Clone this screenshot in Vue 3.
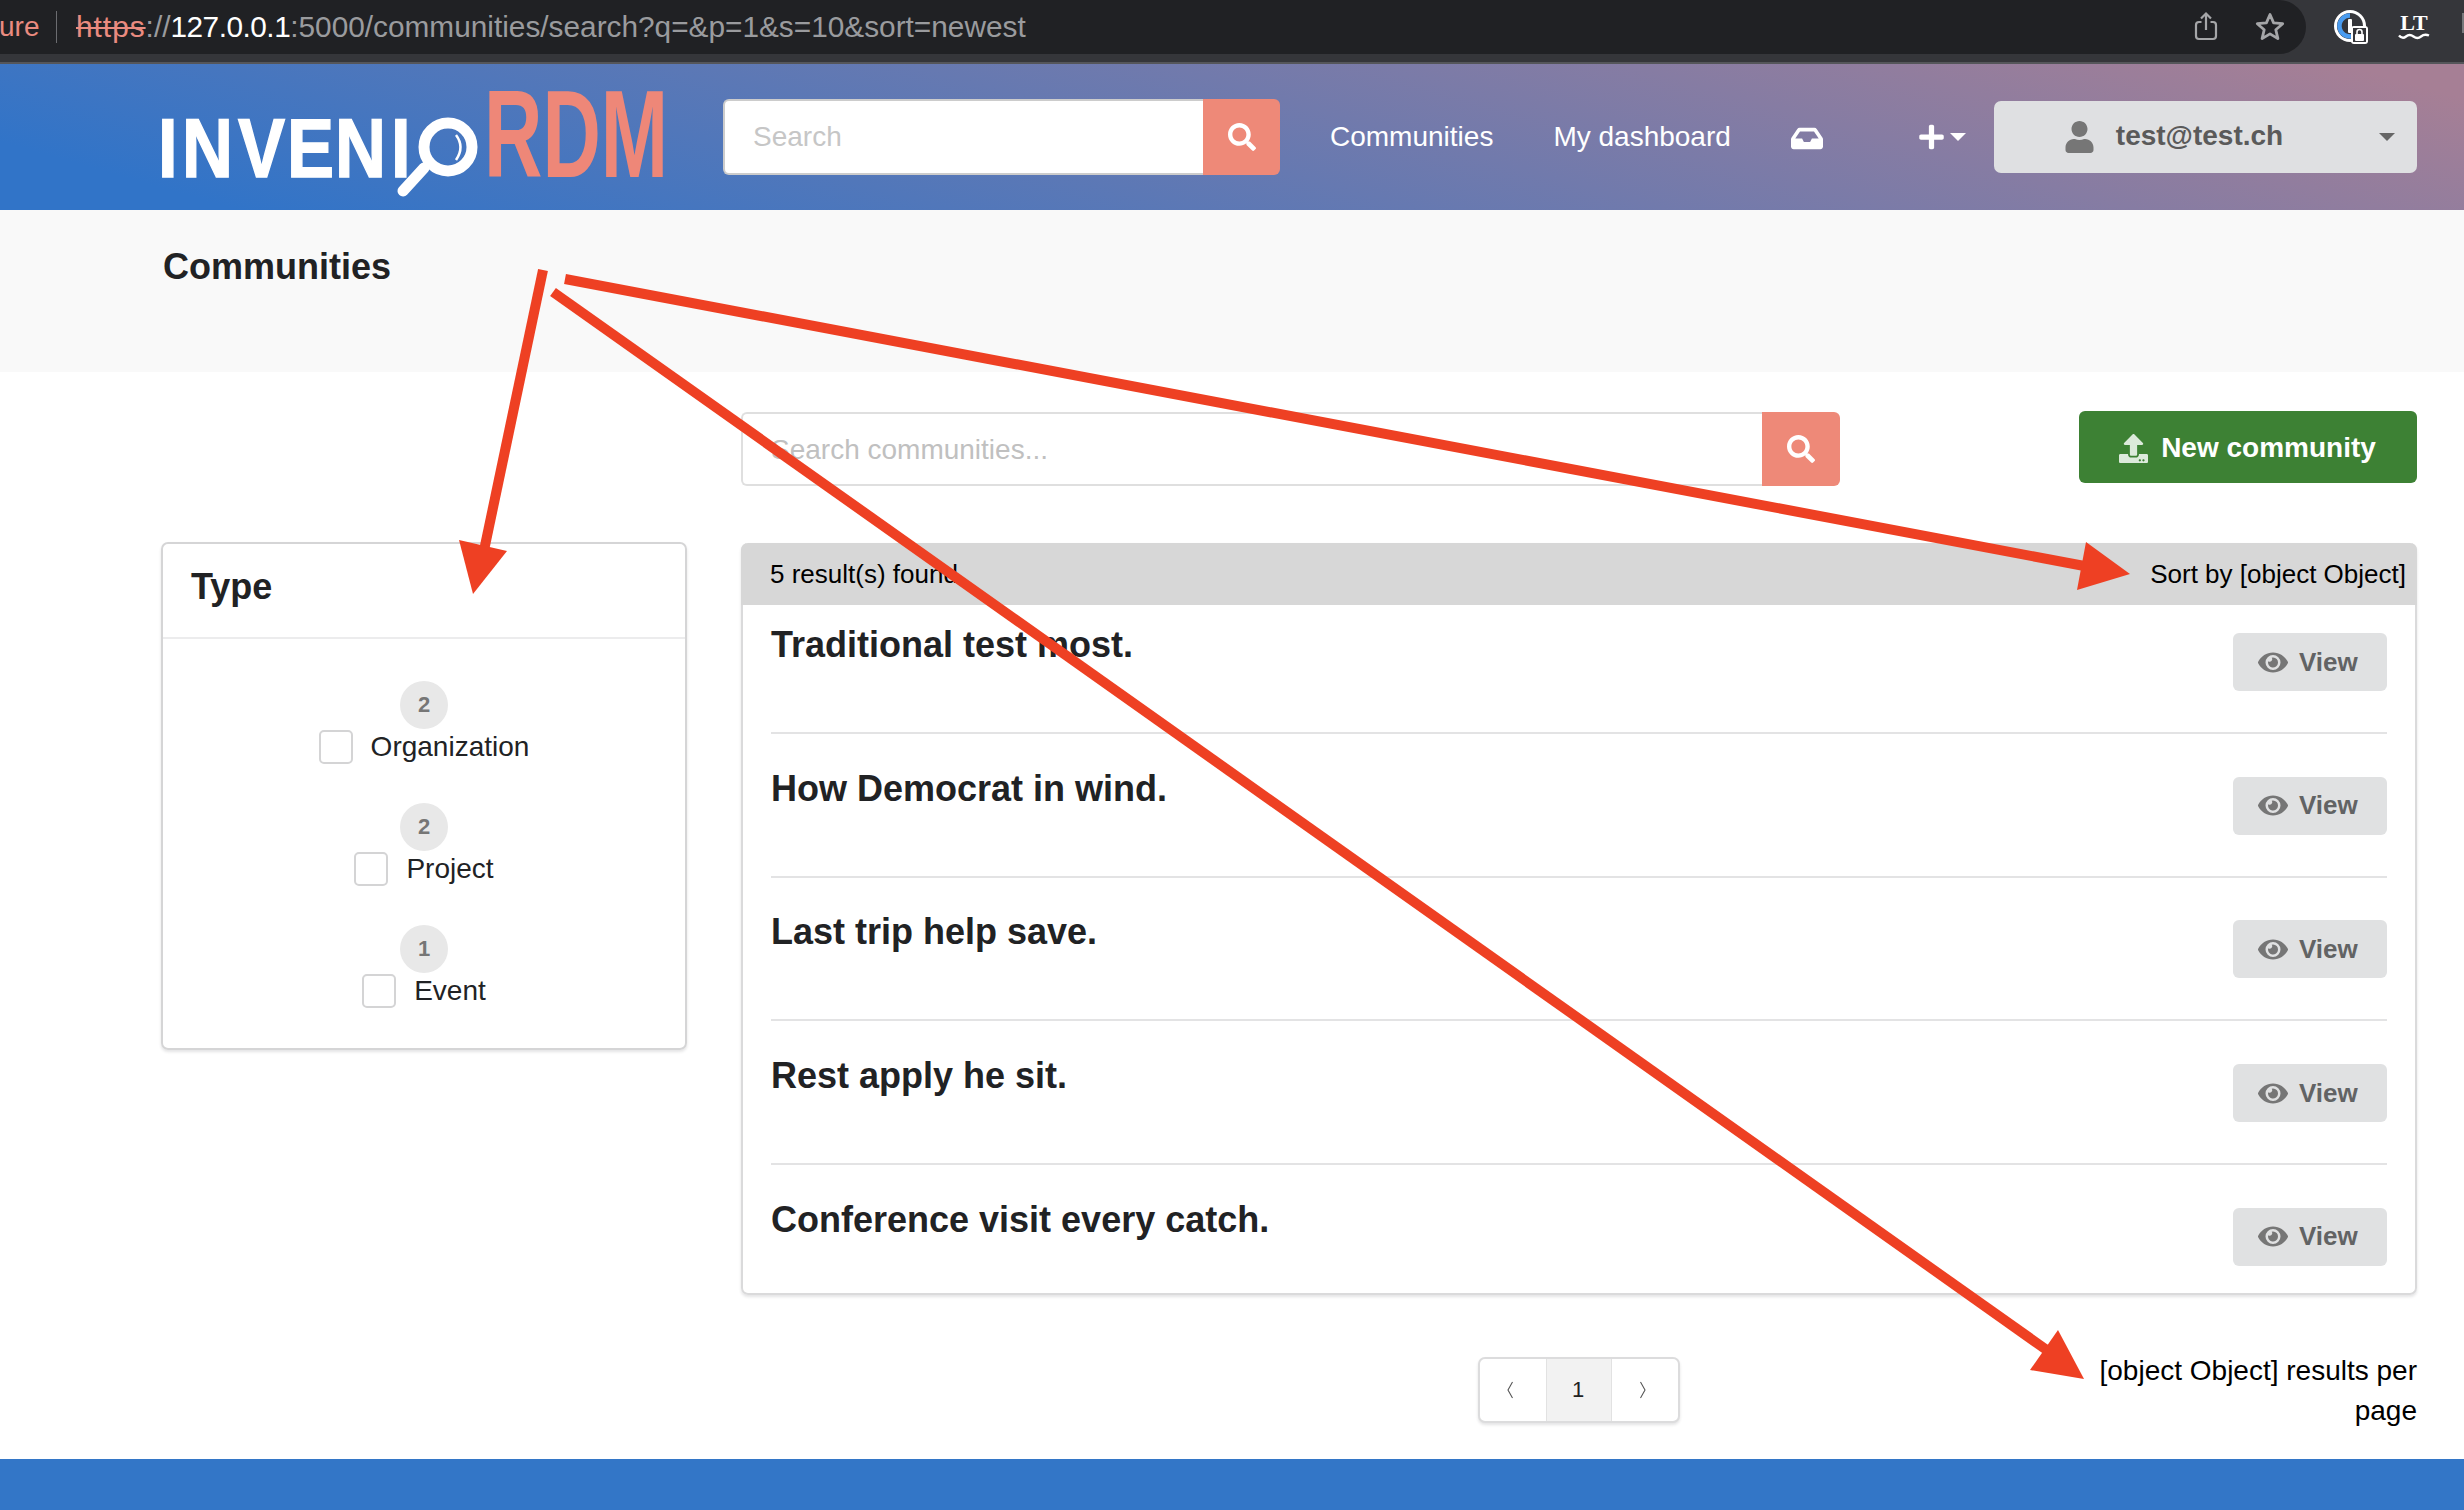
<script setup>
const facets = [
  { count: 2, label: 'Organization' },
  { count: 2, label: 'Project' },
  { count: 1, label: 'Event' },
]
const results = [
  'Traditional test most.',
  'How Democrat in wind.',
  'Last trip help save.',
  'Rest apply he sit.',
  'Conference visit every catch.',
]
const searchPath = 'M505 442.7L405.3 343c-4.5-4.5-10.6-7-17-7H372c27.6-35.3 44-79.7 44-128C416 93.1 322.9 0 208 0S0 93.1 0 208s93.1 208 208 208c48.3 0 92.7-16.4 128-44v16.3c0 6.4 2.5 12.5 7 17l99.7 99.7c9.4 9.4 24.6 9.4 33.9 0l28.3-28.3c9.4-9.4 9.4-24.6.1-34zM208 336c-70.7 0-128-57.2-128-128 0-70.7 57.2-128 128-128 70.7 0 128 57.2 128 128 0 70.7-57.2 128-128 128z'
const eyePath = 'M572.52 241.4C518.29 135.59 410.93 64 288 64S57.68 135.64 3.48 241.41a32.35 32.35 0 0 0 0 29.19C57.71 376.41 165.07 448 288 448s230.32-71.64 284.52-177.41a32.35 32.35 0 0 0 0-29.19zM288 400a144 144 0 1 1 144-144 143.93 143.93 0 0 1-144 144zm0-240a95.31 95.31 0 0 0-25.31 3.79 47.85 47.85 0 0 1-66.9 66.9A95.78 95.78 0 1 0 288 160z'
</script>

<template>
  <div class="page">
    <div class="chrome">
      <div class="address">
        <span class="insecure">ure</span>
        <span class="sep"></span>
        <span class="url"><s class="scheme">https</s><span class="dim">://</span><span class="host">127.0.0.1</span><span class="dim">:5000/communities/search?q=&amp;p=1&amp;s=10&amp;sort=newest</span></span>
        <svg class="c-icon share" viewBox="0 0 24 30" width="24" height="30"><path d="M7.500 11H5a3 3 0 0 0-3 3v11a3 3 0 0 0 3 3h14a3 3 0 0 0 3-3V14a3 3 0 0 0-3-3h-2.500" fill="none" stroke="#a5a6a8" stroke-width="2.200"/><path d="M12 19V2.500M7 7.500l5-5 5 5" fill="none" stroke="#a5a6a8" stroke-width="2.200"/></svg>
        <svg class="c-icon star" viewBox="0 0 30 30" width="30" height="30"><path d="M15 2.500l3.600 8.400 9.100.8-6.900 6 2.100 8.900L15 21.900l-7.900 4.700 2.100-8.900-6.900-6 9.100-.8z" fill="none" stroke="#a5a6a8" stroke-width="2.800" stroke-linejoin="round"/></svg>
      </div>
      <div class="ext">
        <svg class="pw" viewBox="0 0 34 34" width="34" height="34">
          <circle cx="16" cy="16" r="16" fill="#fff"/>
          <circle cx="16" cy="16" r="13" fill="#35363a"/>
          <path d="M16 5.500A10.500 10.500 0 1 0 22 24.600" fill="none" stroke="#4a9cf0" stroke-width="4.500"/>
          <rect x="14" y="9" width="4" height="14" rx="1" fill="#fff"/>
          <rect x="17" y="16" width="17" height="18" rx="3" fill="#fff"/>
          <rect x="19" y="18" width="13" height="14" fill="#35363a"/>
          <rect x="21" y="24" width="9" height="7" rx="1" fill="#fff"/>
          <path d="M23 24v-2a2.500 2.500 0 0 1 5 0v2" fill="none" stroke="#fff" stroke-width="1.600"/>
        </svg>
        <div class="lt"><span>LT</span><svg viewBox="0 0 32 8" width="32" height="8"><path d="M1 2.500q3.500 4 7 1t7.500 0 7.500 0 8 -1" fill="none" stroke="#fff" stroke-width="2.400"/></svg></div>
        <span class="ext-edge"></span>
      </div>
    </div>

    <header class="topbar">
      <svg class="logo" viewBox="0 0 510 112" width="510" height="112">
        <text transform="translate(0 96) scale(.85 1)" x="-4.700 23.500 89.400 147 203.500 269.400" y="0" class="logo-a">INVENI</text>
        <g fill="none" stroke="#fff">
          <circle cx="286" cy="66" r="24" stroke-width="11"/>
          <path d="M262 87l-21 23" stroke-width="11" stroke-linecap="round"/>
        </g>
        <path d="M294 54q9 12 0 25" fill="none" stroke="#fff" stroke-width="2.500"/>
        <text transform="translate(322 96) scale(.652 1)" x="0" y="0" class="logo-b">RDM</text>
      </svg>
      <div class="head-search">
        <div class="head-input">Search</div>
        <button class="search-btn">
          <svg viewBox="0 0 512 512" width="28" height="28"><path :d="searchPath" fill="#fff"/></svg>
        </button>
      </div>
      <nav class="nav">
        <a>Communities</a>
        <a>My dashboard</a>
        <svg class="inbox" viewBox="0 0 576 512" width="32" height="29"><path fill="#fff" d="M567.938 243.908L462.25 85.374A48.003 48.003 0 0 0 422.311 64H153.689a48 48 0 0 0-39.938 21.374L8.062 243.908A47.994 47.994 0 0 0 0 270.533V400c0 26.51 21.49 48 48 48h480c26.51 0 48-21.49 48-48V270.533a47.994 47.994 0 0 0-8.062-26.625zM162.252 128h251.497l85.333 128H376l-32 64H232l-32-64H76.918l85.334-128z"/></svg>
      </nav>
      <div class="plus">
        <svg viewBox="0 0 448 512" width="25" height="28"><path fill="#fff" d="M416 208H272V64c0-17.670-14.330-32-32-32h-32c-17.670 0-32 14.330-32 32v144H32c-17.670 0-32 14.330-32 32v32c0 17.670 14.330 32 32 32h144v144c0 17.670 14.330 32 32 32h32c17.670 0 32-14.330 32-32V304h144c17.670 0 32-14.330 32-32v-32c0-17.670-14.330-32-32-32z"/></svg>
        <span class="caret white"></span>
      </div>
      <div class="user">
        <svg viewBox="0 0 448 512" width="29" height="32"><path fill="#767676" d="M224 256c70.700 0 128-57.300 128-128S294.700 0 224 0 96 57.300 96 128s57.300 128 128 128zm89.600 32h-16.700c-22.200 10.200-46.900 16-72.900 16s-50.600-5.800-72.900-16h-16.700C60.200 288 0 348.200 0 422.400V464c0 26.500 21.500 48 48 48h352c26.500 0 48-21.500 48-48v-41.600c0-74.200-60.200-134.400-134.400-134.400z"/></svg>
        <span class="user-name">test@test.ch</span>
        <span class="caret grey"></span>
      </div>
    </header>

    <section class="band"><h1>Communities</h1></section>

    <main class="content">
      <aside class="side">
        <div class="facet">
          <h2>Type</h2>
          <ul>
            <li v-for="f in facets" :key="f.label">
              <span class="badge">{{ f.count }}</span>
              <label><span class="check"></span>{{ f.label }}</label>
            </li>
          </ul>
        </div>
      </aside>
      <div class="col">
        <div class="search-row">
          <div class="list-search">
            <div class="list-input">Search communities...</div>
            <button class="search-btn list">
              <svg viewBox="0 0 512 512" width="28" height="28"><path :d="searchPath" fill="#fff"/></svg>
            </button>
          </div>
          <button class="new">
            <svg viewBox="0 0 512 512" width="29" height="29"><path fill="#dceadb" d="M296 384h-80c-13.300 0-24-10.700-24-24V192h-87.700c-17.800 0-26.700-21.500-14.100-34.100L242.300 5.700c7.500-7.500 19.800-7.500 27.300 0l152.200 152.200c12.600 12.600 3.700 34.100-14.100 34.100H320v168c0 13.300-10.700 24-24 24zm216-8v112c0 13.300-10.700 24-24 24H24c-13.300 0-24-10.700-24-24V376c0-13.300 10.700-24 24-24h136v8c0 30.900 25.100 56 56 56h80c30.900 0 56-25.100 56-56v-8h136c13.300 0 24 10.700 24 24zm-124 88c0-11-9-20-20-20s-20 9-20 20 9 20 20 20 20-9 20-20zm64 0c0-11-9-20-20-20s-20 9-20 20 9 20 20 20 20-9 20-20z"/></svg>
            New community
          </button>
        </div>
        <div class="results">
          <div class="res-head"><span>5 result(s) found</span><span>Sort by [object Object]</span></div>
          <div class="res-body">
            <div class="row" v-for="r in results" :key="r">
              <h3>{{ r }}</h3>
              <button class="view">
                <svg viewBox="0 0 576 512" width="30" height="27"><path :d="eyePath" fill="#767676"/></svg>
                View
              </button>
            </div>
          </div>
        </div>
        <div class="bottom">
          <div></div>
          <div class="pager">
            <span class="cell prev"><svg viewBox="0 0 8 20" width="8" height="20"><path d="M6.500 2 2 10l4.500 8" fill="none" stroke="#555" stroke-width="1.100"/></svg></span>
            <span class="cell active">1</span>
            <span class="cell next"><svg viewBox="0 0 8 20" width="8" height="20"><path d="M1.500 2 6 10l-4.500 8" fill="none" stroke="#555" stroke-width="1.100"/></svg></span>
          </div>
          <div class="per-page"><p>[object Object] results per page</p></div>
        </div>
      </div>
    </main>

    <footer class="foot"></footer>

    <svg class="marks" viewBox="0 0 2464 1510" width="2464" height="1510">
      <g fill="#ee4023" stroke="#ee4023">
        <path d="M543 270 482 560" stroke-width="10" fill="none"/>
        <path d="M459 540 507 551 473 594z" stroke="none"/>
        <path d="M565 279 2095 568" stroke-width="10" fill="none"/>
        <path d="M2086 542 2130 574 2077 590z" stroke="none"/>
        <path d="M553 292 2058 1358" stroke-width="10" fill="none"/>
        <path d="M2058 1330 2084 1379 2030 1370z" stroke="none"/>
      </g>
    </svg>
  </div>
</template>

<style>
html, body { margin: 0; background: #fff; }
</style>

<style scoped>
.page { position: relative; width: 2464px; height: 1510px; overflow: hidden; display: flex; flex-direction: column; font-family: "Liberation Sans", Arial, sans-serif; color: #212224; }
button { font-family: inherit; border: 0; }
h1, h2, h3, p, ul { margin: 0; padding: 0; }
ul { list-style: none; }

.chrome { height: 64px; flex: none; background: #35363a; border-bottom: 2px solid #55565a; box-sizing: border-box; display: flex; }
.address { width: 2306px; height: 54px; box-sizing: border-box; background: #202124; border-radius: 0 27px 27px 0; display: flex; align-items: center; padding-right: 21px; }
.insecure { width: 57px; font-size: 28px; color: #ea8b80; margin-left: -1px; }
.sep { width: 1px; height: 32px; background: #6b6c70; }
.url { font-size: 29.800px; margin-left: 19px; flex: 1; white-space: nowrap; }
.scheme { color: #ea8b80; letter-spacing: 1px; }
.dim { color: #9a9b9e; }
.host { color: #fff; letter-spacing: -.5px; }
.c-icon { flex: none; }
.share { margin-right: 37px; margin-top: -2px; }
.ext { flex: 1; height: 54px; display: flex; align-items: center; padding-left: 28px; gap: 30px; position: relative; }
.lt { display: flex; flex-direction: column; align-items: center; color: #fff; font: 700 22px/20px "Liberation Serif", serif; width: 32px; }
.ext-edge { position: absolute; right: 0; top: 13px; width: 2px; height: 20px; background: #77787b; }

.topbar { height: 146px; flex: none; box-sizing: border-box; padding: 0 47px 0 162px; display: flex; align-items: center; background: linear-gradient(16deg, #3174c8 8%, #a67f95 96%); }
.logo { flex: none; margin-right: 51px; overflow: visible; }
.logo-a { font: 700 83px "Liberation Sans", sans-serif; fill: #fff; stroke: #fff; stroke-width: 1.500px; }
.logo-b { font: 700 124px "Liberation Sans", sans-serif; fill: #ee8778; }
.head-search { display: flex; width: 557px; height: 76px; flex: none; margin-right: 50px; }
.head-input { flex: 1; background: #fff; border: 2px solid #ccc; border-right: 0; border-radius: 6px 0 0 6px; box-sizing: border-box; font-size: 28px; color: #c6c6c6; line-height: 72px; padding-left: 28px; }
.search-btn { width: 77px; background: #ee8978; border-radius: 0 6px 6px 0; display: flex; align-items: center; justify-content: center; padding: 0; }
.nav { display: flex; align-items: center; font-size: 28px; color: #fff; gap: 60px; flex: none; }
.inbox { margin-top: 2px; }
.plus { margin-left: 96px; display: flex; align-items: center; gap: 6px; flex: none; }
.caret { display: inline-block; width: 0; height: 0; border-left: 8px solid transparent; border-right: 8px solid transparent; }
.caret.white { border-top: 8px solid #fff; }
.caret.grey { border-top: 8px solid #666; position: absolute; right: 22px; top: 32px; }
.user { position: relative; margin-left: 28px; width: 423px; height: 72px; flex: none; background: #dfe0e2; border-radius: 7px; display: flex; align-items: center; padding-left: 71px; box-sizing: border-box; gap: 22px; }
.user-name { font-size: 28px; font-weight: 700; color: #5a5a5a; margin-bottom: 2px; }

.band { height: 162px; flex: none; background: #f9f9f9; padding: 36px 0 0 163px; box-sizing: border-box; }
.band h1 { font-size: 36px; line-height: 42px; font-weight: 700; color: #212224; }

.content { flex: 1; display: flex; padding: 40px 47px 0 161px; gap: 54px; min-height: 0; }
.side { width: 526px; flex: none; padding-top: 130px; }
.facet { border: 2px solid #d5d5d6; border-radius: 7px; box-shadow: 0 2px 3px rgba(34, 36, 38, .12); height: 508px; box-sizing: border-box; }
.facet h2 { font-size: 36px; line-height: 42px; font-weight: 700; height: 95px; box-sizing: border-box; padding: 22px 0 0 28px; border-bottom: 2px solid #ececed; }
.facet ul { padding-top: 42px; display: flex; flex-direction: column; gap: 24px; }
.facet li { display: flex; flex-direction: column; align-items: center; height: 98px; }
.badge { width: 48px; height: 48px; border-radius: 50%; background: #e8e8e8; color: #767676; font-size: 22px; font-weight: 700; line-height: 48px; text-align: center; flex: none; }
.facet label { display: flex; align-items: center; font-size: 28px; line-height: 34px; gap: 18px; margin-top: 1px; }
.check { width: 34px; height: 34px; box-sizing: border-box; border: 2px solid #d4d4d5; border-radius: 5px; background: #fff; }

.col { flex: 1; min-width: 0; }
.search-row { display: flex; justify-content: space-between; align-items: flex-start; height: 131px; }
.list-search { width: 1099px; height: 74px; display: flex; }
.list-input { flex: 1; border: 2px solid #dfdfdf; border-right: 0; border-radius: 6px 0 0 6px; box-sizing: border-box; font-size: 28px; color: #c0c0c0; line-height: 72px; padding-left: 28px; }
.search-btn.list { width: 78px; }
.new { width: 338px; height: 72px; margin-top: -1px; background: #3d8134; color: #fff; font-size: 28px; font-weight: 700; border-radius: 6px; display: flex; align-items: center; justify-content: center; gap: 13px; padding: 2px 1px 0 0; }

.results { border: 2px solid #dadadb; border-top: 0; border-radius: 7px; box-shadow: 0 2px 3px rgba(34, 36, 38, .12); height: 752px; box-sizing: border-box; }
.res-head { height: 62px; margin: 0 -2px; background: #d7d7d7; border-radius: 7px 7px 0 0; display: flex; justify-content: space-between; align-items: center; padding: 0 11px 0 29px; font-size: 26px; color: #000; }
.row { height: 129px; box-sizing: border-box; margin: 0 28px 14.700px; padding-top: 19px; border-bottom: 2px solid #e3e3e4; display: flex; justify-content: space-between; align-items: flex-start; }
.row:last-child { border-bottom: 0; }
.row h3 { font-size: 36px; line-height: 42px; font-weight: 700; color: #212224; }
.view { width: 154px; height: 58px; margin-top: 9px; background: #e0e1e2; color: #626364; font-size: 26px; font-weight: 700; border-radius: 6px; display: flex; align-items: center; gap: 11px; padding: 0 0 0 25px; }

.bottom { display: grid; grid-template-columns: 1fr auto 1fr; margin-top: 62px; align-items: start; }
.pager { display: flex; height: 66px; border: 2px solid #dcdcdd; border-radius: 7px; box-shadow: 0 2px 3px rgba(34, 36, 38, .12); box-sizing: border-box; background: #fff; overflow: hidden; }
.cell { width: 66px; display: flex; align-items: center; justify-content: center; font-size: 22px; color: #222; }
.cell.prev { padding-right: 6px; box-sizing: border-box; }
.cell.next { padding-right: 4px; box-sizing: border-box; }
.cell.active { background: #f2f2f2; border-left: 1px solid #e2e2e2; border-right: 1px solid #e2e2e2; padding-right: 2px; box-sizing: border-box; }
.per-page { display: flex; justify-content: flex-end; }
.per-page p { width: 330px; text-align: right; font-size: 28px; line-height: 40px; color: #000; margin-top: -6px; }

.foot { height: 51px; flex: none; background: #3376c7; }
.marks { position: absolute; left: 0; top: 0; pointer-events: none; }
</style>
